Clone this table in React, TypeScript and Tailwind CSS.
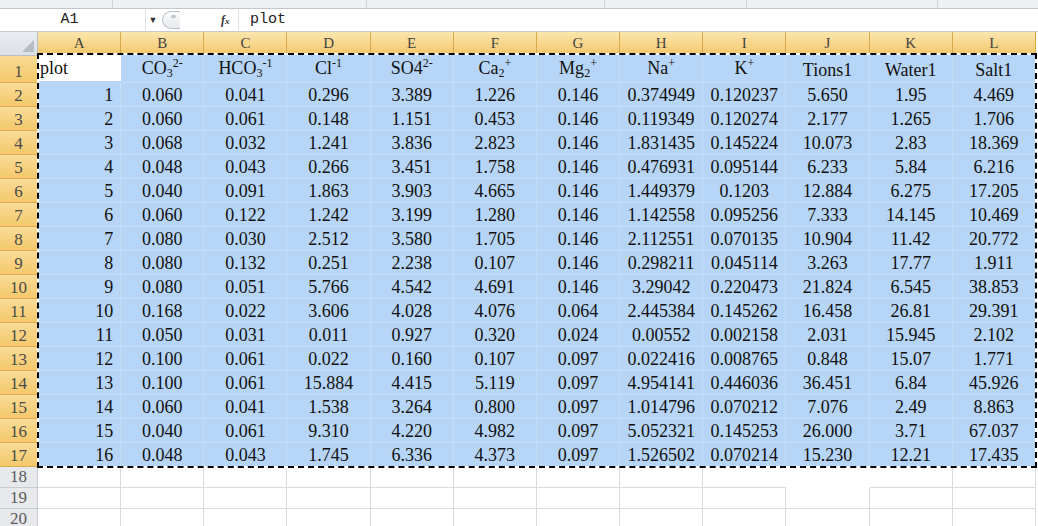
import React from 'react';

const cols = ['A', 'B', 'C', 'D', 'E', 'F', 'G', 'H', 'I', 'J', 'K', 'L'];

const data: string[][] = [
  ['1', '0.060', '0.041', '0.296', '3.389', '1.226', '0.146', '0.374949', '0.120237', '5.650', '1.95', '4.469'],
  ['2', '0.060', '0.061', '0.148', '1.151', '0.453', '0.146', '0.119349', '0.120274', '2.177', '1.265', '1.706'],
  ['3', '0.068', '0.032', '1.241', '3.836', '2.823', '0.146', '1.831435', '0.145224', '10.073', '2.83', '18.369'],
  ['4', '0.048', '0.043', '0.266', '3.451', '1.758', '0.146', '0.476931', '0.095144', '6.233', '5.84', '6.216'],
  ['5', '0.040', '0.091', '1.863', '3.903', '4.665', '0.146', '1.449379', '0.1203', '12.884', '6.275', '17.205'],
  ['6', '0.060', '0.122', '1.242', '3.199', '1.280', '0.146', '1.142558', '0.095256', '7.333', '14.145', '10.469'],
  ['7', '0.080', '0.030', '2.512', '3.580', '1.705', '0.146', '2.112551', '0.070135', '10.904', '11.42', '20.772'],
  ['8', '0.080', '0.132', '0.251', '2.238', '0.107', '0.146', '0.298211', '0.045114', '3.263', '17.77', '1.911'],
  ['9', '0.080', '0.051', '5.766', '4.542', '4.691', '0.146', '3.29042', '0.220473', '21.824', '6.545', '38.853'],
  ['10', '0.168', '0.022', '3.606', '4.028', '4.076', '0.064', '2.445384', '0.145262', '16.458', '26.81', '29.391'],
  ['11', '0.050', '0.031', '0.011', '0.927', '0.320', '0.024', '0.00552', '0.002158', '2.031', '15.945', '2.102'],
  ['12', '0.100', '0.061', '0.022', '0.160', '0.107', '0.097', '0.022416', '0.008765', '0.848', '15.07', '1.771'],
  ['13', '0.100', '0.061', '15.884', '4.415', '5.119', '0.097', '4.954141', '0.446036', '36.451', '6.84', '45.926'],
  ['14', '0.060', '0.041', '1.538', '3.264', '0.800', '0.097', '1.014796', '0.070212', '7.076', '2.49', '8.863'],
  ['15', '0.040', '0.061', '9.310', '4.220', '4.982', '0.097', '5.052321', '0.145253', '26.000', '3.71', '67.037'],
  ['16', '0.048', '0.043', '1.745', '6.336', '4.373', '0.097', '1.526502', '0.070214', '15.230', '12.21', '17.435'],
];

// excel-style sub/superscripts, nudged without touching the line box
const Sub = ({ t }: { t: string }) => <span className="relative top-[3px] text-[12px] align-baseline">{t}</span>;
const Sup = ({ t }: { t: string }) => <span className="relative -top-[7px] text-[12px] align-baseline">{t}</span>;

const heads: React.ReactNode[] = [
  <>CO<Sub t="3" /><Sup t="2-" /></>,
  <>HCO<Sub t="3" /><Sup t="-1" /></>,
  <>Cl<Sup t="-1" /></>,
  <>SO4<Sup t="2-" /></>,
  <>Ca<Sub t="2" /><Sup t="+" /></>,
  <>Mg<Sub t="2" /><Sup t="+" /></>,
  <>Na<Sup t="+" /></>,
  <>K<Sup t="+" /></>,
  <>Tions1</>,
  <>Water1</>,
  <>Salt1</>,
];

const rowGrid = 'grid grid-cols-[38px_repeat(12,83.17px)]';
const serif = "font-['Liberation_Serif','Times_New_Roman',serif]";

function RowHead({ n, selected }: { n: number; selected: boolean }) {
  return (
    <div
      className={
        selected
          ? 'flex items-end justify-center pb-[1px] border-r border-b border-[#d7ae55] bg-linear-to-b from-[#f9dc97] to-[#f4c869] text-[17px] text-[#4b4b4b] leading-none ' + serif
          : 'flex items-end justify-center pb-[1px] border-r border-b border-[#c9ccd1] bg-[#e7e9ec] text-[17px] text-[#5b5b5b] leading-none ' + serif
      }
    >
      <span className="pb-[1px]">{n}</span>
    </div>
  );
}

export default function App() {
  return (
    <div className="w-[1038px] h-[526px] overflow-hidden bg-white">
      {/* ribbon edge */}
      <div className="h-[9px] flex bg-[#eef0f3] border-b border-[#c3c7cc]">
        <div className="w-[113px] border-r border-[#cfd3d8]" />
        <div className="w-[254px] border-r border-[#cfd3d8]" />
        <div className="w-[238px] border-r border-[#cfd3d8]" />
        <div className="w-[142px] border-r border-[#cfd3d8]" />
        <div className="w-[191px] border-r border-[#cfd3d8]" />
      </div>

      {/* formula bar */}
      <div className="h-[23px] flex items-center bg-white border-b border-[#c6cacf]">
        <div className="w-[146px] h-full flex items-center justify-center pr-[6px] text-[15px] text-[#222] font-['Liberation_Mono',monospace] border-r border-[#dde0e4]">
          A1
        </div>
        <div className="w-[14px] flex justify-center text-[9px] text-[#333]">▼</div>
        <div className="ml-[2px] w-[18px] h-[18px] rounded-l-full border border-r-0 border-[#b9bec5] bg-linear-to-b from-[#fafbfc] to-[#e6e9ed] flex items-start justify-center pl-[4px]">
          <span className="w-[5px] h-[3px] mt-[3px] rounded-full bg-[#c2c7cd]" />
        </div>
        <div className="w-[41px]" />
        <div className="w-[16px] text-[12px] italic font-bold text-[#333] font-['Liberation_Serif',serif]">
          f<span className="text-[9px]">x</span>
        </div>
        <div className="h-full border-l border-[#dde0e4] ml-[1px]" />
        <div className="pl-[11px] text-[15px] text-[#222] font-['Liberation_Mono',monospace]">plot</div>
      </div>

      {/* sheet */}
      <div className="relative">
        {/* column headers */}
        <div className={rowGrid + ' h-[22px]'}>
          <div className="relative bg-linear-to-b from-[#e9ecf0] to-[#dde1e6] border-r border-b border-[#b9bec5]">
            <svg className="absolute right-[3px] bottom-[3px]" width="12" height="12" viewBox="0 0 12 12">
              <polygon points="12,0 12,12 0,12" fill="#b6bcc4" />
            </svg>
          </div>
          {cols.map((c) => (
            <div
              key={c}
              className={'flex items-center justify-center border-r border-b border-[#d6a94e] bg-linear-to-b from-[#fbe6ad] to-[#f3c767] text-[15px] text-[#444] ' + serif}
            >
              {c}
            </div>
          ))}
        </div>

        {/* row 1 */}
        <div className={rowGrid + ' h-[29px]'}>
          <RowHead n={1} selected />
          <div className={'flex items-end px-[2px] pb-[2px] bg-white border-b-2 border-[#b7d5f6] text-[18px] text-[#111] leading-[22px] ' + serif}>plot</div>
          {heads.map((h, i) => (
            <div
              key={i}
              className={'flex items-end justify-center pb-[1px] bg-[#b7d5f6] border-r border-b border-[#c8def6] text-[18px] text-[#111] leading-[22px] ' + serif}
            >
              <span>{h}</span>
            </div>
          ))}
        </div>

        {/* rows 2-17 */}
        {data.map((row, r) => (
          <div key={r} className={rowGrid + ' h-[24px]'}>
            <RowHead n={r + 2} selected />
            {row.map((v, i) => (
              <div
                key={i}
                className={
                  (i === 0 ? 'justify-end pr-[7px] ' : 'justify-center ') +
                  'flex items-end bg-[#b7d5f6] border-r border-b border-[#c8def6] text-[18px] text-[#111] leading-[22px] ' +
                  serif
                }
              >
                {v}
              </div>
            ))}
          </div>
        ))}

        {/* rows 18-20 */}
        {[18, 19, 20].map((n) => (
          <div key={n} className={rowGrid + ' h-[21px]'}>
            <RowHead n={n} selected={false} />
            {cols.map((c, i) => {
              const gap = n === 18 && (i === 8 || i === 9);
              const noBottom = n === 18 && i === 9;
              return (
                <div
                  key={c}
                  className={
                    (gap ? 'border-r-0 ' : 'border-r ') +
                    (noBottom ? 'border-b-0 ' : 'border-b ') +
                    'bg-white border-[#d9dbde]'
                  }
                />
              );
            })}
          </div>
        ))}

        {/* copy marquee */}
        <div className="pointer-events-none absolute left-[37px] top-[21px] w-[1000px] h-[415px] border-[2px] border-white" />
        <div className="pointer-events-none absolute left-[37px] top-[21px] w-[1000px] h-[415px] border-[2px] border-dashed border-black" />
      </div>
    </div>
  );
}
